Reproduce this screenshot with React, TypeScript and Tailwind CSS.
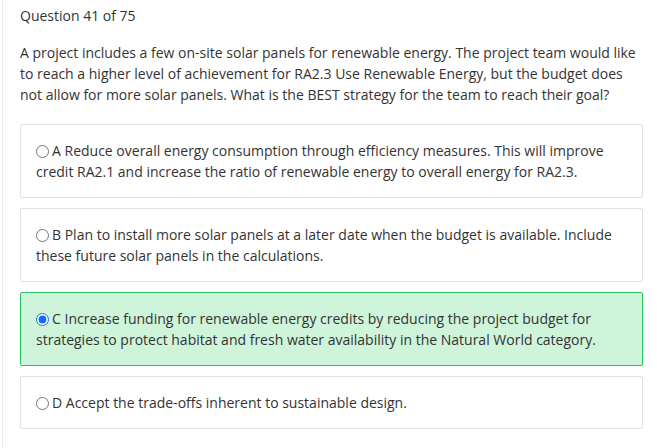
import React from 'react';

type Option = { key: string; text: string; selected?: boolean };

const OPTIONS: Option[] = [
  { key: 'A', text: 'Reduce overall energy consumption through efficiency measures. This will improve credit RA2.1 and increase the ratio of renewable energy to overall energy for RA2.3.' },
  { key: 'B', text: 'Plan to install more solar panels at a later date when the budget is available. Include these future solar panels in the calculations.' },
  { key: 'C', text: 'Increase funding for renewable energy credits by reducing the project budget for strategies to protect habitat and fresh water availability in the Natural World category.', selected: true },
  { key: 'D', text: 'Accept the trade-offs inherent to sustainable design.' },
];

export default function App() {
  return (
    <div
      className="min-h-[448px] bg-white text-[14px] leading-[21px] text-[#333]"
      style={{ fontFamily: '"Open Sans", "Liberation Sans", sans-serif' }}
    >
      <div className="ml-[2px] min-h-[448px] border-l border-[#eaeaea] pl-[17px] pr-[14px] pt-[5px]">
        <div>Question 41 of 75</div>

        <p className="mt-[16px] mb-[19px]">
          A project includes a few on-site solar panels for renewable energy. The project team would like
          to reach a higher level of achievement for RA2.3 Use Renewable Energy, but the budget does
          not allow for more solar panels. What is the BEST strategy for the team to reach their goal?
        </p>

        <div className="flex flex-col gap-[10px]">
          {OPTIONS.map((o) => (
            <label
              key={o.key}
              className={`block rounded-[2px] border px-[15px] py-[15px] ${
                o.selected ? 'border-[#22c55e] bg-[#cef4da]' : 'border-[#dee2e6] bg-white'
              }`}
            >
              <input
                type="radio"
                name="answer"
                checked={!!o.selected}
                readOnly
                className="mr-[3px] ml-0 h-[13px] w-[13px] align-[-2px] accent-[#0d6efd]"
              />
              {o.key} {o.text}
            </label>
          ))}
        </div>
      </div>
    </div>
  );
}
